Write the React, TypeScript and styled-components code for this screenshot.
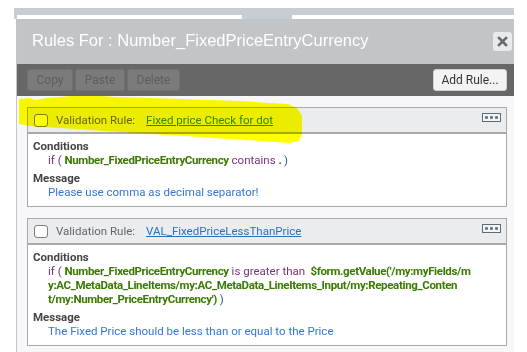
import React from "react";
import styled, { createGlobalStyle } from "styled-components";

const Global = createGlobalStyle`
  html, body { margin: 0; padding: 0; background: #ffffff; }
  body { font-family: Roboto, "Liberation Sans", Arial, sans-serif; overflow: hidden; }
`;

const Page = styled.div`
  position: relative;
  width: 527px;
  height: 352px;
  padding-top: 8px;
  box-sizing: border-box;
  overflow: hidden;
`;

const TopBand = styled.div`
  margin-left: 14px;
  width: 500px;
  height: 7px;
  background: #c7cdd3;
`;

const TabRow = styled.div`
  margin-left: 14px;
  width: 500px;
  height: 4px;
  display: flex;
  background: #c7cdd3;
`;

const TabGap = styled.div<{ $w: number }>`
  width: ${(p) => p.$w}px;
  background: #ffffff;
`;

const TabSpacer = styled.div<{ $w: number }>`
  width: ${(p) => p.$w}px;
`;

const Dialog = styled.div`
  margin-left: 16px;
  width: 498px;
  border-left: 1px solid #c4c6c8;
  box-sizing: border-box;
`;

const Header = styled.div`
  height: 45px;
  background: #c1c5c8;
  display: flex;
  align-items: center;
  justify-content: space-between;
  padding: 0 2px 0 15px;
`;

const Title = styled.div`
  font-family: "Liberation Sans", Arial, sans-serif;
  font-size: 16.5px;
  color: #ffffff;
  margin-top: -2px;
`;

const CloseButton = styled.div`
  width: 19px;
  height: 19px;
  border-radius: 3px;
  background: #e8eaec;
  display: flex;
  align-items: center;
  justify-content: center;
  margin-top: -1px;
`;

const Toolbar = styled.div`
  height: 32px;
  background: #676767;
  display: flex;
  align-items: center;
  padding: 0 7px 0 10px;
  gap: 2px;
`;

const ToolButton = styled.div<{ $w: number }>`
  width: ${(p) => p.$w}px;
  height: 22px;
  box-sizing: border-box;
  border-radius: 3px;
  border: 1px solid #717171;
  background: #7b7b7b;
  color: #5e5e5e;
  font-size: 12px;
  display: flex;
  align-items: center;
  justify-content: center;
`;

const AddButton = styled.div`
  margin-left: auto;
  width: 74px;
  height: 22px;
  box-sizing: border-box;
  border-radius: 3px;
  border: 1px solid #d0d0d0;
  background: #f3f3f3;
  color: #333333;
  font-size: 12px;
  display: flex;
  align-items: center;
  justify-content: center;
`;

const Content = styled.div`
  background: #f7f7f9;
  padding: 11px 7px 20px 10px;
  display: flex;
  flex-direction: column;
  gap: 11px;
`;

const Card = styled.div`
  border: 1px solid #a9a9a9;
  background: #ffffff;
`;

const CardHeader = styled.div`
  height: 24px;
  background: #ebecee;
  border-bottom: 2px solid #a9a9a9;
  display: flex;
  align-items: center;
  padding: 0 5px 0 6px;
  font-size: 11.5px;
`;

const Check = styled.div`
  width: 14px;
  height: 13px;
  box-sizing: border-box;
  border: 1px solid #7d7d7d;
  border-radius: 3px;
  background: #ffffff;
  margin-right: 8px;
`;

const RuleLabel = styled.span`
  color: #666666;
  margin-right: 11px;
`;

const RuleLink = styled.a<{ $c: string }>`
  color: ${(p) => p.$c};
  text-decoration: underline;
`;

const More = styled.div`
  margin-left: auto;
  margin-top: -6px;
  width: 19px;
  height: 9px;
  box-sizing: border-box;
  border: 1px solid #5e6b75;
  background: #f3f4f5;
  display: flex;
  align-items: center;
  justify-content: center;
  gap: 2px;
`;

const Dot = styled.span`
  width: 3px;
  height: 3px;
  background: #6d7982;
  border-radius: 1px;
`;

const CardBody = styled.div`
  padding: 5px 5px 7px 5px;
  font-size: 11.5px;
  line-height: 14px;
`;

const SectionLabel = styled.div<{ $gap?: boolean }>`
  font-weight: bold;
  color: #444444;
  margin-top: ${(p) => (p.$gap ? "4px" : "0")};
`;

const Line = styled.div`
  padding-left: 15px;
  white-space: nowrap;
`;

const Kw = styled.span`
  color: #7d2f82;
`;

const Field = styled.span`
  color: #3a7a00;
  font-weight: bold;
  letter-spacing: -0.35px;
`;

const Paren = styled.span`
  color: #1f5fa8;
`;

const Msg = styled.div`
  padding-left: 15px;
  color: #3276d6;
`;

const Highlight = styled.svg`
  position: absolute;
  left: 0;
  top: 0;
  width: 527px;
  height: 352px;
  mix-blend-mode: multiply;
  pointer-events: none;
`;

const CloseIcon = () => (
  <svg width="11" height="11" viewBox="0 0 11 11">
    <path d="M2 2 L9 9 M9 2 L2 9" stroke="#6a6a6a" strokeWidth="2.6" strokeLinecap="square" />
  </svg>
);

const highlightPoints =
  "19,99 30,98 35,100 47,98 72,96 100,96 117,97 180,99 240,101 270,103 288,104 297,108 302,116 302,134 299,141 290,143 260,141 200,137 120,132 60,128 30,126 19,124";

export default function App() {
  return (
    <>
      <Global />
      <Page>
        <TopBand />
        <TabRow>
          <TabSpacer $w={3} />
          <TabGap $w={225} />
          <TabSpacer $w={50} />
          <TabGap $w={222} />
        </TabRow>
        <Dialog>
          <Header>
            <Title>Rules For : Number_FixedPriceEntryCurrency</Title>
            <CloseButton>
              <CloseIcon />
            </CloseButton>
          </Header>
          <Toolbar>
            <ToolButton $w={46}>Copy</ToolButton>
            <ToolButton $w={50}>Paste</ToolButton>
            <ToolButton $w={53}>Delete</ToolButton>
            <AddButton>Add Rule...</AddButton>
          </Toolbar>
          <Content>
            <Card>
              <CardHeader>
                <Check />
                <RuleLabel>Validation Rule:</RuleLabel>
                <RuleLink $c="#2b8a00">Fixed price Check for dot</RuleLink>
                <More>
                  <Dot />
                  <Dot />
                  <Dot />
                </More>
              </CardHeader>
              <CardBody>
                <SectionLabel>Conditions</SectionLabel>
                <Line>
                  <Kw>if ( </Kw>
                  <Field>Number_FixedPriceEntryCurrency</Field>
                  <Kw> contains </Kw>
                  <Field> . </Field>
                  <Paren>)</Paren>
                </Line>
                <SectionLabel $gap>Message</SectionLabel>
                <Msg>Please use comma as decimal separator!</Msg>
              </CardBody>
            </Card>
            <Card>
              <CardHeader>
                <Check />
                <RuleLabel>Validation Rule:</RuleLabel>
                <RuleLink $c="#2a6fc0">VAL_FixedPriceLessThanPrice</RuleLink>
                <More>
                  <Dot />
                  <Dot />
                  <Dot />
                </More>
              </CardHeader>
              <CardBody>
                <SectionLabel>Conditions</SectionLabel>
                <Line>
                  <Kw>if ( </Kw>
                  <Field>Number_FixedPriceEntryCurrency</Field>
                  <Kw> is greater than </Kw>
                  <Field> &nbsp;$form.getValue('/my:myFields/m</Field>
                </Line>
                <Line>
                  <Field>y:AC_MetaData_LineItems/my:AC_MetaData_LineItems_Input/my:Repeating_Conten</Field>
                </Line>
                <Line>
                  <Field>t/my:Number_PriceEntryCurrency')</Field>
                  <Paren> )</Paren>
                </Line>
                <SectionLabel $gap>Message</SectionLabel>
                <Msg>The Fixed Price should be less than or equal to the Price</Msg>
              </CardBody>
            </Card>
          </Content>
        </Dialog>
        <Highlight viewBox="0 0 527 352">
          <polygon points={highlightPoints} fill="#ffff00" />
        </Highlight>
      </Page>
    </>
  );
}
